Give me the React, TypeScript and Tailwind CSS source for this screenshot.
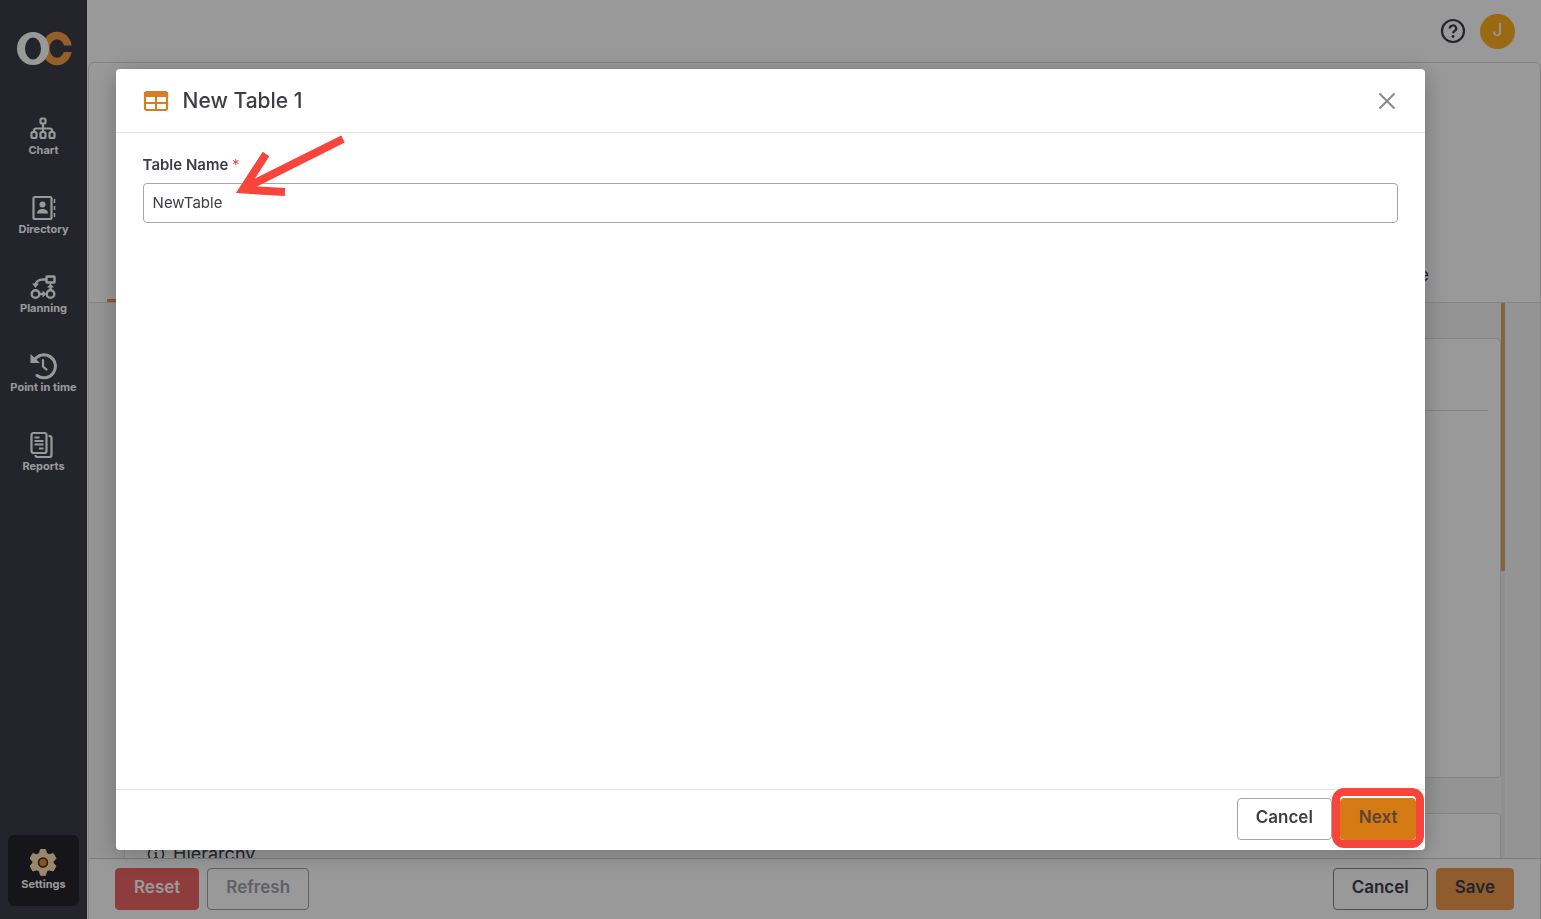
import type { ReactNode } from "react";
import { useState } from "react";

const ChartIcon = () => (
  <svg viewBox="0 0 28 24" className="h-6 w-7" fill="none" stroke="currentColor" strokeWidth="2.200">
    <rect x="10.500" y="1.500" width="5" height="5" rx="1.500" />
    <rect x="1.500" y="15" width="5" height="6" rx="1.500" />
    <rect x="10.500" y="15" width="5" height="6" rx="1.500" />
    <rect x="19.500" y="15" width="5" height="6" rx="1.500" />
    <path d="M13 7v8M4 15v-1.500a2 2 0 0 1 2-2h14a2 2 0 0 1 2 2V15" />
  </svg>
);

const DirectoryIcon = () => (
  <svg viewBox="0 0 28 26" className="h-[26px] w-7" fill="none" stroke="currentColor" strokeWidth="2.200">
    <rect x="3.500" y="2" width="18" height="22" rx="1.500" />
    <circle cx="12.500" cy="9.500" r="3" fill="currentColor" stroke="none" />
    <path d="M7 18.500c0-3 2.500-4.500 5.500-4.500s5.500 1.500 5.500 4.500z" fill="currentColor" stroke="none" />
    <path d="M24.500 4v4M24.500 11v4M24.500 18v4" strokeWidth="1.600" />
  </svg>
);

const PlanningIcon = () => (
  <svg viewBox="0 0 28 26" className="h-[26px] w-7" fill="none" stroke="currentColor" strokeWidth="2.400">
    <rect x="16.500" y="2.500" width="8" height="6" rx="0.500" />
    <path d="M16 5.500h-3c-4.500 0-7.500 2.500-7.500 6" />
    <circle cx="5.500" cy="20" r="3.800" />
    <circle cx="20.500" cy="20" r="3.800" />
    <path d="M2 9.500h7L5.500 14zM20.500 9.500l3.500 4h-7zM12.500 16.500l4 3.500-4 3.500z" fill="currentColor" stroke="none" />
    <path d="M10 20h4M20.500 12v4" />
  </svg>
);

const HistoryIcon = () => (
  <svg viewBox="0 0 28 28" className="size-7" fill="none" stroke="currentColor" strokeWidth="3">
    <path d="M4 8.500A11.500 11.500 0 1 1 7 23.500" strokeLinecap="round" />
    <path d="M0.500 2v9H10z" fill="currentColor" stroke="none" />
    <path d="M13 8v6.500l3.500 3" strokeWidth="2.200" strokeLinecap="round" />
  </svg>
);

const ReportsIcon = () => (
  <svg viewBox="0 0 28 28" className="size-7" fill="none" stroke="currentColor" strokeWidth="2.200">
    <rect x="1.500" y="2" width="15" height="20" rx="2" />
    <path d="M18.500 5h1a2 2 0 0 1 2 2v17a2 2 0 0 1-2 2h-12a2 2 0 0 1-2-2" />
    <path d="M4.500 6.500h5M4.500 10h9M4.500 13.500h9M9 17.500h4.500" strokeWidth="1.800" />
  </svg>
);

const SettingsIcon = () => (
  <svg viewBox="0 0 28 28" className="size-7">
    <path
      d="M10.500 0.500h5l1 3.700 2.700 1.500 4-1.200 2.800 5-2.800 3v1.500l2.800 3-2.800 5-4-1.200-2.700 1.500-1 4h-5l-1-4-2.700-1.500-4 1.200-2.800-5 2.800-3v-1.500l-2.800-3 2.800-5 4 1.200 2.700-1.500z"
      fill="#ffe2b8"
      strokeLinejoin="round"
      stroke="#ffe2b8"
    />
    <circle cx="13" cy="13.500" r="4.500" fill="#e88a24" stroke="#33281e" strokeWidth="1.500" />
  </svg>
);

const Logo = () => (
  <svg viewBox="0 0 56 36" className="h-9 w-14" fill="none" role="img" aria-label="OC">
    <clipPath id="logo-gap">
      <path d="M0 0h56v15.500H40v6.500h16v14H0z" />
    </clipPath>
    <ellipse cx="41" cy="18.500" rx="11.200" ry="13" stroke="#f79f45" strokeWidth="7.500" clipPath="url(#logo-gap)" />
    <path
      d="M1 18.500a16 16.500 0 1 1 32 0a16 16.500 0 1 1-32 0zM9 18.500a8 11 0 1 0 16 0a8 11 0 1 0-16 0z"
      fill="#ffffff"
      fillRule="evenodd"
    />
  </svg>
);

const TableIcon = () => (
  <svg viewBox="0 0 26 22" className="h-[22px] w-[26px]" fill="none" stroke="#d67e21" strokeWidth="2.200">
    <rect x="2" y="2" width="22" height="18" rx="2" />
    <path d="M2 3h22v3H2z" fill="#d67e21" />
    <path d="M13 6v14M2 13h22" />
  </svg>
);

const navItems = [
  { label: "Chart", icon: <ChartIcon /> },
  { label: "Directory", icon: <DirectoryIcon /> },
  { label: "Planning", icon: <PlanningIcon /> },
  { label: "Point in time", icon: <HistoryIcon /> },
  { label: "Reports", icon: <ReportsIcon /> },
];

function NavLink({ label, icon, active }: { label: string; icon: ReactNode; active?: boolean }) {
  return (
    <a
      href="#"
      className={
        active
          ? "mx-2 flex h-[71px] flex-col items-center justify-center rounded-md bg-[#24242c] pb-px text-[11px] leading-[14px] font-bold text-white"
          : "flex h-[79px] flex-col items-center text-[11px] leading-[14px] font-bold whitespace-nowrap text-white"
      }
    >
      <span className="flex h-7 items-center">{icon}</span>
      <span>{label}</span>
    </a>
  );
}

function Sidebar() {
  return (
    <nav className="flex w-[87px] shrink-0 flex-col bg-[#3d3d4b] pt-[30px] pb-[13px]">
      <div className="mb-[49px] flex justify-center">
        <Logo />
      </div>
      {navItems.map((item) => (
        <NavLink key={item.label} label={item.label} icon={item.icon} />
      ))}
      <div className="mt-auto">
        <NavLink label="Settings" icon={<SettingsIcon />} active />
      </div>
    </nav>
  );
}

const button = "flex h-[42px] items-center justify-center rounded border px-[18px] pb-[2px] text-[17px] font-semibold";

function Page() {
  return (
    <div className="flex min-w-0 flex-1 flex-col bg-white">
      <header className="flex h-[62px] shrink-0 items-center justify-end gap-[14px] pr-[26px]">
        <button type="button" aria-label="Help" className="text-[#3d3d4b]">
          <svg viewBox="0 0 26 26" className="size-[26px]" fill="none" stroke="currentColor" strokeWidth="2.200">
            <circle cx="13" cy="13" r="11" />
            <path d="M9.800 10.500a3.200 3 0 1 1 4.800 2.500c-1.200.7-1.600 1.200-1.600 2.300" />
            <circle cx="13" cy="18.500" r="1.400" fill="currentColor" stroke="none" />
          </svg>
        </button>
        <button type="button" className="size-[35px] rounded-full bg-[#ffb020] text-[17px] text-white">
          J
        </button>
      </header>
      <div className="ml-px flex min-h-0 flex-1 flex-col overflow-hidden rounded-t-md border border-b-0 border-[#dcdcdc]">
        <div className="flex h-60 shrink-0 items-end justify-between border-b border-[#dcdcdc] pr-[111px] pl-[18px]">
          <div className="h-[3px] w-24 bg-[#e8954a]" />
          <a href="#" className="pb-[14px] text-[17px] text-[#3d3d4b]">
            e
          </a>
        </div>
        <div className="flex min-h-0 flex-1 overflow-hidden bg-[#f7f7f7] pr-[35px] pl-[35px]">
          <div className="flex flex-1 flex-col gap-[35px] overflow-hidden pt-[35px]">
            <section className="h-[440px] shrink-0 rounded border border-[#dcdcdc] bg-white px-3">
              <div className="h-[72px] border-b border-[#dcdcdc]" />
            </section>
            <section className="h-[120px] shrink-0 rounded border border-[#dcdcdc] bg-white px-[22px] pt-7">
              <h2 className="flex items-center gap-2 text-[18px] leading-6 text-[#3d3d4b]">
                <svg viewBox="0 0 18 18" className="size-[18px]" fill="none" stroke="currentColor" strokeWidth="1.500">
                  <circle cx="9" cy="9" r="7.500" />
                  <path d="M7.500 8H9v5M7 13h4M9 4.500v1.500" />
                </svg>
                Hierarchy
              </h2>
            </section>
          </div>
          <div className="w-1 bg-[#eeeeee]">
            <div className="h-[268px] bg-[#e0a468]" />
          </div>
        </div>
        <footer className="flex h-[61px] shrink-0 items-center gap-2 border-t border-[#cfcfcf] px-[26px] pb-px">
          <button type="button" className={`${button} border-[#ee6464] bg-[#ee6464] text-white`}>
            Reset
          </button>
          <button type="button" className={`${button} border-[#a0a0a8] text-[#a0a0a8]`}>
            Refresh
          </button>
          <button type="button" className={`${button} ml-auto border-[#83838f] text-[#3d3d4b]`}>
            Cancel
          </button>
          <button type="button" className={`${button} border-[#ee9c4c] bg-[#ee9c4c] text-[#3d3d4b]`}>
            Save
          </button>
        </footer>
      </div>
    </div>
  );
}

function NewTableDialog() {
  const [name, setName] = useState("NewTable");

  return (
    <div className="fixed inset-0 flex items-center justify-center bg-black/40">
      <div
        role="dialog"
        aria-labelledby="dialog-title"
        className="flex h-[85%] w-[85%] flex-col rounded bg-white text-[#3d3d45] shadow-[0_4px_24px_rgba(0,0,0,0.25)]"
      >
        <div className="flex h-16 shrink-0 items-center border-b border-[#e4e4e4] pt-[2px] pr-7 pl-[27px]">
          <TableIcon />
          <h1 id="dialog-title" className="ml-[14px] text-[21px] leading-7 font-medium">
            New Table 1
          </h1>
          <button type="button" aria-label="Close" className="ml-auto text-[#8a8a8e]">
            <svg viewBox="0 0 20 20" className="size-5" fill="none" stroke="currentColor" strokeWidth="2">
              <path d="M3 3l14 14M17 3L3 17" strokeLinecap="round" />
            </svg>
          </button>
        </div>
        <div className="relative flex-1 px-[27px] pt-[22px]">
          <label htmlFor="table-name" className="block text-[15px] leading-5 font-semibold">
            Table Name <span className="font-normal text-[#e5484d]">*</span>
          </label>
          <input
            id="table-name"
            type="text"
            value={name}
            onChange={(e) => setName(e.target.value)}
            className="mt-2 block h-10 w-full rounded border border-[#a5a5aa] px-[9px] text-[15px] outline-none"
          />
          <svg
            viewBox="0 0 110 64"
            className="pointer-events-none absolute top-0 left-[119px] h-16 w-[110px]"
            fill="none"
            stroke="#f8453b"
            strokeWidth="8"
          >
            <path d="M108 6L8 56M31 21L8 56.500l42 2.500" />
          </svg>
        </div>
        <div className="flex h-[61px] shrink-0 items-center justify-end gap-2 border-t border-[#e4e4e4] pr-[9px] pb-[2px]">
          <button type="button" className={`${button} border-[#a5a5aa]`}>
            Cancel
          </button>
          <div className="relative">
            <button type="button" className={`${button} border-[#d67a14] bg-[#d67a14] text-[#5b4438]`}>
              Next
            </button>
            <div className="pointer-events-none absolute -inset-x-2 -top-[10px] -bottom-2 rounded-xl border-8 border-[#f8453b]" />
          </div>
        </div>
      </div>
    </div>
  );
}

export default function App() {
  return (
    <div className="flex h-screen font-['Inter',sans-serif]">
      <Sidebar />
      <Page />
      <NewTableDialog />
    </div>
  );
}
